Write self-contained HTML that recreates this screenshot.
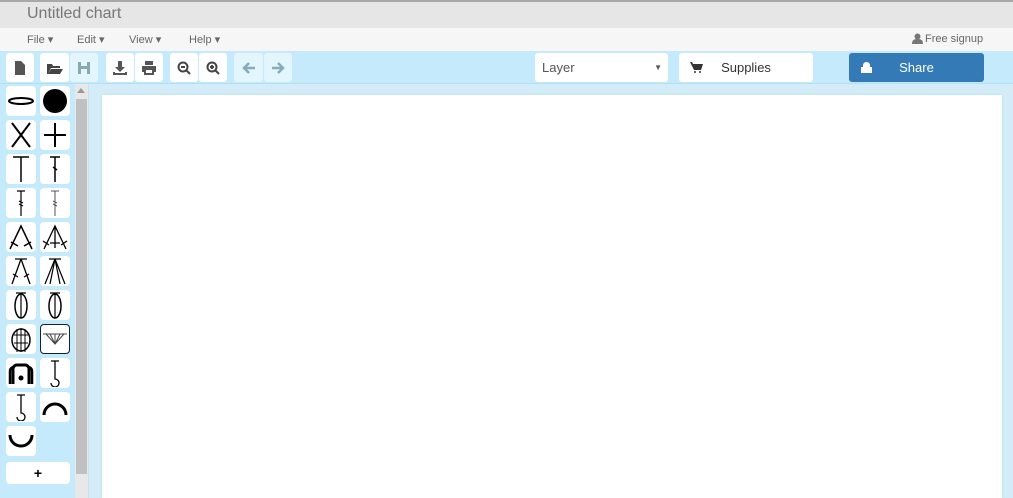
<!DOCTYPE html>
<html><head><meta charset="utf-8">
<style>
*{box-sizing:border-box;margin:0;padding:0}
body{width:1013px;height:498px;overflow:hidden;font-family:"Liberation Sans",Arial,sans-serif;background:#d4ecf7;position:relative}
.abs{position:absolute}
#title{left:0;top:0;width:1013px;height:28px;background:#e6e6e6;border-top:2px solid #a8a8a8}
#title span{position:absolute;left:27px;top:3px;font-size:16px;color:#777}
#menu{left:0;top:28px;width:1013px;height:23px;background:#f6f6f6;font-size:11px;color:#666}
#menu span{position:absolute;top:5px}
#tb{left:0;top:51px;width:1013px;height:33px;background:#c4eafb;border-bottom:1px solid #b2dff3}
.b{position:absolute;top:2px;height:29px;background:#fff;border-radius:3px;display:flex;align-items:center;justify-content:center}
.b.d{background:#e3f5fd}
#left{left:0;top:84px;width:75px;height:414px;background:#c4eafb}
.s{position:absolute;width:30px;height:30px;background:#fff;border-radius:4px;display:flex;align-items:center;justify-content:center}
#sb{left:75px;top:84px;width:14px;height:414px;background:#e8e8e8;border-right:1px solid #bfe3f3}
#paper{left:102px;top:95px;width:900px;height:403px;background:#fff;box-shadow:0 0 3px #b5dcee}
</style></head><body>
<div id="title" class="abs"><span>Untitled chart</span></div>
<div id="menu" class="abs">
<span style="left:27px">File ▾</span><span style="left:77px">Edit ▾</span><span style="left:129px">View ▾</span><span style="left:189px">Help ▾</span>
<svg style="position:absolute;left:912px;top:5px" width="11" height="11"><circle cx="5.5" cy="3.5" r="3" fill="#777"/><path d="M0 11c0-4 2-5 5.5-5s5.5 1 5.5 5z" fill="#777"/></svg>
<span style="left:925px">Free signup</span>
</div>
<div id="tb" class="abs">
<div class="b" style="left:6px;width:28px"><svg width="12" height="14"><path d="M1 0h6l4 4v10H1z" fill="#555"/></svg></div>
<div class="b" style="left:40px;width:29px"><svg width="16" height="12"><path d="M0 2h5l1 2h7v2H4L1 12H0z M4 7h12l-3 5H1z" fill="#444"/></svg></div>
<div class="b d" style="left:70px;width:28px"><svg width="12" height="12"><path d="M0 0h12v12H0z M3 0v4h6V0z M3 7h6v5H3z" fill="#8aa" fill-rule="evenodd"/></svg></div>
<div class="b" style="left:106px;width:28px"><svg width="14" height="14"><path d="M5 0h4v6h3L7 11 2 6h3z M0 11h2v1h10v-1h2v3H0z" fill="#555"/></svg></div>
<div class="b" style="left:135px;width:28px"><svg width="14" height="14"><path d="M3 0h8v4H3z M0 5h14v6h-2v3H2v-3H0z" fill="#555"/><rect x="4" y="9" width="6" height="3" fill="#fff"/></svg></div>
<div class="b" style="left:170px;width:28px"><svg width="14" height="14"><circle cx="6" cy="6" r="4.5" stroke="#444" stroke-width="2" fill="none"/><path d="M9 9l4 4M4 6h4" stroke="#444" stroke-width="2"/></svg></div>
<div class="b" style="left:199px;width:28px"><svg width="14" height="14"><circle cx="6" cy="6" r="4.5" stroke="#444" stroke-width="2" fill="none"/><path d="M9 9l4 4M4 6h4M6 4v4" stroke="#444" stroke-width="2"/></svg></div>
<div class="b d" style="left:234px;width:29px"><svg width="14" height="12"><path d="M13 6H3M7 1L2 6l5 5" stroke="#8ab" stroke-width="2.5" fill="none"/></svg></div>
<div class="b d" style="left:264px;width:28px"><svg width="14" height="12"><path d="M1 6h10M7 1l5 5-5 5" stroke="#8ab" stroke-width="2.5" fill="none"/></svg></div>
<div class="b" style="left:535px;width:133px;justify-content:flex-start;padding-left:7px;font-size:13px;color:#555">Layer<span style="position:absolute;right:6px;font-size:8px">▼</span></div>
<div class="b" style="left:679px;width:134px;font-size:13px;color:#333"><svg style="position:absolute;left:11px" width="13" height="11"><path d="M0 0h2l1 2h10l-2 6H4z" fill="#333"/><circle cx="5" cy="10" r="1" fill="#333"/><circle cx="10" cy="10" r="1" fill="#333"/></svg>Supplies</div>
<div class="b" style="left:849px;width:135px;background:#337ab7;color:#fff;font-size:13px"><svg style="position:absolute;left:12px" width="11" height="11"><path d="M2 5V3a3.5 3 0 0 1 7 0v2h2v6H0V5z" fill="#fff"/></svg>Share</div>
</div>
<div id="left" class="abs">
<div class="s" style="left:6px;top:2px"><svg width="28" height="28"><ellipse cx="14" cy="14" rx="12" ry="3" stroke="#000" stroke-width="2" fill="none"/></svg></div>
<div class="s" style="left:40px;top:2px"><svg width="28" height="28"><circle cx="14" cy="14" r="12" fill="#000"/></svg></div>
<div class="s" style="left:6px;top:36px"><svg width="28" height="28"><path d="M5 2l18 24M23 2L5 26" stroke="#000" stroke-width="2"/></svg></div>
<div class="s" style="left:40px;top:36px"><svg width="28" height="28"><path d="M14 2v24M3 14h22" stroke="#000" stroke-width="2"/></svg></div>
<div class="s" style="left:6px;top:70px"><svg width="28" height="28"><path d="M6 2h16M14 2v25" stroke="#000" stroke-width="1.5"/></svg></div>
<div class="s" style="left:40px;top:70px"><svg width="28" height="28"><path d="M9 2h10M14 2v25M12 12l4 3" stroke="#000" stroke-width="1.5"/></svg></div>
<div class="s" style="left:6px;top:104px"><svg width="28" height="28"><path d="M10 2h8M14 2v25M12 12l4 2M12 15l4 2" stroke="#000" stroke-width="1.2"/></svg></div>
<div class="s" style="left:40px;top:104px"><svg width="28" height="28"><path d="M10 2h8M14 2v25M12 12l4 2M12 15l4 2" stroke="#555" stroke-width="1"/></svg></div>
<div class="s" style="left:6px;top:138px"><svg width="28" height="28"><path d="M3 26L14 3l11 23M4 19l7 4M24 19l-7 4" stroke="#000" stroke-width="1.5" fill="none"/></svg></div>
<div class="s" style="left:40px;top:138px"><svg width="28" height="28"><path d="M3 26L14 3l11 23M14 3v22M9 20h10M2 18l6 4M26 18l-6 4" stroke="#000" stroke-width="1.3" fill="none"/></svg></div>
<div class="s" style="left:6px;top:172px"><svg width="28" height="28"><path d="M8 2h12M14 2L5 27M14 2l9 25M6 17l5 3M22 17l-5 3" stroke="#000" stroke-width="1.3" fill="none"/></svg></div>
<div class="s" style="left:40px;top:172px"><svg width="28" height="28"><path d="M8 2h12M14 2L4 27M14 2l10 25M14 2L9 27M14 2l5 25" stroke="#000" stroke-width="1.2" fill="none"/></svg></div>
<div class="s" style="left:6px;top:206px"><svg width="28" height="28"><path d="M9 2h10M14 2v25" stroke="#000" stroke-width="1.2"/><ellipse cx="14" cy="15" rx="6" ry="12" stroke="#000" stroke-width="1.5" fill="none"/></svg></div>
<div class="s" style="left:40px;top:206px"><svg width="28" height="28"><path d="M9 2h10M14 2v25" stroke="#000" stroke-width="1.2"/><ellipse cx="14" cy="15" rx="6" ry="12" stroke="#000" stroke-width="1.5" fill="none"/></svg></div>
<div class="s" style="left:6px;top:240px"><svg width="28" height="28"><ellipse cx="14" cy="15" rx="9" ry="11" stroke="#000" stroke-width="1.5" fill="none"/><path d="M10 4v23M14 3v24M18 4v23M7 10h14M7 18h14" stroke="#000" stroke-width="1"/></svg></div>
<div class="s" style="left:40px;top:240px;border:1.5px solid #123"><svg width="28" height="28"><path d="M2 9h24M5 9l9 10 9-10M9 9l5 10 5-10M14 9v10" stroke="#444" stroke-width="1" fill="none"/></svg></div>
<div class="s" style="left:6px;top:274px"><svg width="28" height="28"><path d="M6 25V10a4 4 0 0 1 4-4h8a4 4 0 0 1 4 4v15" stroke="#000" stroke-width="3" fill="none"/><path d="M3 25V12a4 4 0 0 1 4-4M25 25V12a4 4 0 0 0-4-4" stroke="#000" stroke-width="2.5" fill="none"/><circle cx="14" cy="19" r="2.5" fill="#000"/></svg></div>
<div class="s" style="left:40px;top:274px"><svg width="28" height="28"><path d="M10 2h8M14 2v18a4 4 0 1 1-4 4" stroke="#000" stroke-width="1.3" fill="none"/></svg></div>
<div class="s" style="left:6px;top:308px"><svg width="28" height="28"><path d="M10 2h8M14 2v18a4 4 0 1 1-4 4" stroke="#000" stroke-width="1.3" fill="none"/></svg></div>
<div class="s" style="left:40px;top:308px"><svg width="28" height="28"><path d="M3 22a11 11 0 0 1 22 0" stroke="#000" stroke-width="3" fill="none"/></svg></div>
<div class="s" style="left:6px;top:342px"><svg width="28" height="28"><path d="M3 8a11 11 0 0 0 22 0" stroke="#000" stroke-width="3" fill="none"/></svg></div>
<div class="s" style="left:6px;top:378px;width:64px;height:22px;font-size:14px;font-weight:bold">+</div>
</div>
<div id="sb" class="abs"><div style="position:absolute;left:2px;top:4px;width:0;height:0;border-left:4px solid transparent;border-right:4px solid transparent;border-bottom:5px solid #999"></div><div style="position:absolute;left:1px;top:15px;width:11px;height:375px;background:#c0c0c0"></div></div>
<div id="paper" class="abs"></div>
</body></html>
